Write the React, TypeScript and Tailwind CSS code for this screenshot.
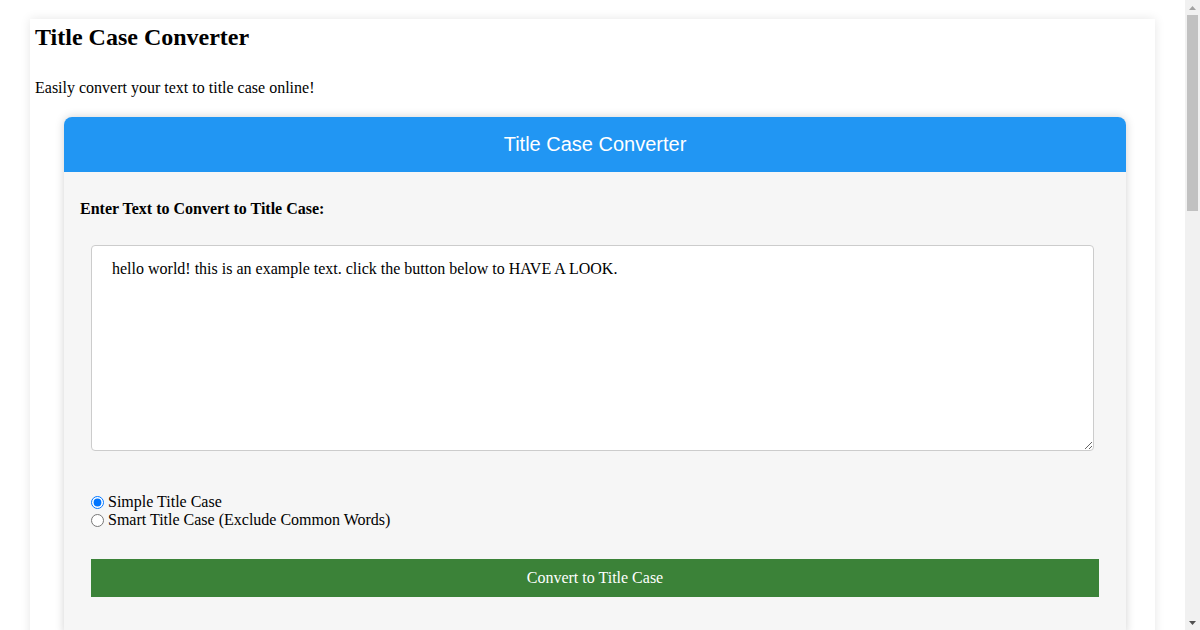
import React from "react";

export default function App() {
  return (
    <div className="flex h-[630px] w-[1200px] overflow-hidden bg-white font-['Liberation_Serif',serif] text-black">
      <div className="flex-1 overflow-hidden">
        <div className="mx-auto mt-[20px] w-[1125px] min-h-[700px] bg-white px-[5px] pt-0 shadow-[0_0_10px_rgba(0,0,0,0.1)]">
          <h2 className="m-0 -mt-[1px] text-[24px] font-bold leading-normal">Title Case Converter</h2>
          <p className="mt-[21px] text-[16px] leading-normal">Easily convert your text to title case online!</p>
          <div className="ml-[29px] mt-[17px] w-[1062px] overflow-hidden rounded-[8px] bg-[#f6f6f6] shadow-[0_0_10px_rgba(0,0,0,0.18)]">
            <div className="bg-[#2196f3] py-[16px] text-center font-['Liberation_Sans',Arial,sans-serif] text-[20px] leading-[23px] text-white">
              Title Case Converter
            </div>
            <div className="px-[16px] pt-[28px] pb-[40px]">
              <label className="block text-[16px] font-bold leading-[18px]">Enter Text to Convert to Title Case:</label>
              <div className="pl-[11px]">
                <textarea
                  className="mt-[27px] block h-[206px] w-[1003px] rounded-[4px] border border-[#cccccc] bg-white pt-[11px] pl-[20px] pr-[10px] font-['Liberation_Serif',serif] text-[16px] leading-normal text-black outline-none"
                  defaultValue="hello world! this is an example text. click the button below to HAVE A LOOK."
                />
                <div className="mt-[42px] flex flex-col text-[16px] leading-[18px]">
                  <label className="flex h-[18px] items-center">
                    <input type="radio" name="mode" defaultChecked className="m-0 mr-[4px] h-[13px] w-[13px]" />
                    <span>Simple Title Case</span>
                  </label>
                  <label className="flex h-[18px] items-center">
                    <input type="radio" name="mode" className="m-0 mr-[4px] h-[13px] w-[13px]" />
                    <span>Smart Title Case (Exclude Common Words)</span>
                  </label>
                </div>
                <button className="mt-[30px] block h-[38px] w-[1008px] bg-[#3b8238] text-center font-['Liberation_Serif',serif] text-[16px] text-white">
                  Convert to Title Case
                </button>
              </div>
            </div>
          </div>
        </div>
      </div>
      <div className="flex h-[630px] w-[15px] flex-col items-center bg-[#f1f1f1]">
        <div className="flex h-[15px] w-full items-center justify-center">
          <svg width="7" height="4" viewBox="0 0 7 4"><path d="M0 4 L3.5 0 L7 4 Z" fill="#a3a3a3" /></svg>
        </div>
        <div className="h-[196px] w-[11px] bg-[#c1c1c1]" />
        <div className="flex-1" />
        <div className="flex h-[15px] w-full items-center justify-center">
          <svg width="7" height="4" viewBox="0 0 7 4"><path d="M0 0 L7 0 L3.5 4 Z" fill="#505050" /></svg>
        </div>
      </div>
    </div>
  );
}
